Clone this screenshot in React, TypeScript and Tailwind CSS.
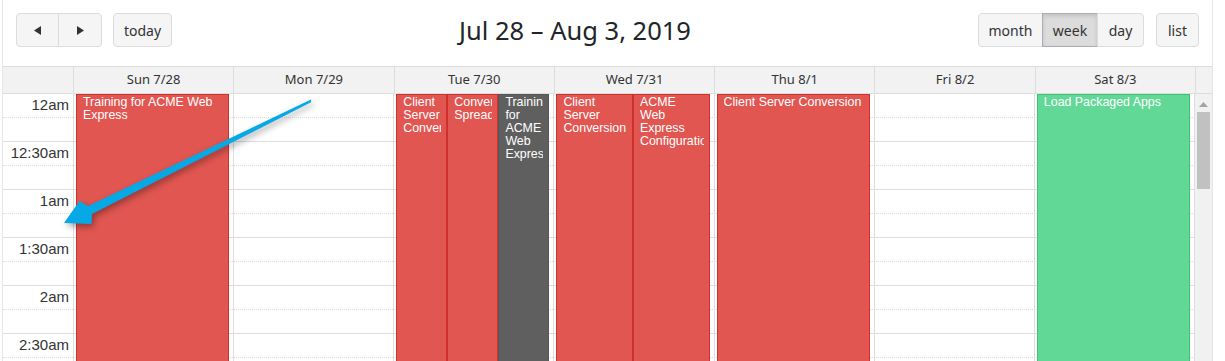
import type { ReactNode } from 'react';

// Week view of a scheduler, FullCalendar-style: toolbar, day header, and a
// time grid with slats underneath and event columns on top.

const DAYS = ['Sun 7/28', 'Mon 7/29', 'Tue 7/30', 'Wed 7/31', 'Thu 8/1', 'Fri 8/2', 'Sat 8/3'];
const LABELS = ['12am', '12:30am', '1am', '1:30am', '2am', '2:30am'];

type Tone = 'red' | 'gray' | 'green';

interface CalEvent {
  title: string;
  tone: Tone;
}

// One entry per day; each inner list is laid out side by side (overlapping events).
const EVENTS: CalEvent[][] = [
  [{ title: 'Training for ACME Web Express', tone: 'red' }],
  [],
  [
    { title: 'Client Server Conversion', tone: 'red' },
    { title: 'Conversion Spreadsheet', tone: 'red' },
    { title: 'Training for ACME Web Express', tone: 'gray' },
  ],
  [
    { title: 'Client Server Conversion', tone: 'red' },
    { title: 'ACME Web Express Configuration', tone: 'red' },
  ],
  [{ title: 'Client Server Conversion', tone: 'red' }],
  [],
  [{ title: 'Load Packaged Apps', tone: 'green' }],
];

const TONE: Record<Tone, string> = {
  red: 'bg-[#e15651] border-[#d0302c]',
  gray: 'bg-[#5f5f5f] border-[#575757]',
  green: 'bg-[#62d896] border-[#3cc671]',
};

const ui = { fontFamily: '"Noto Sans", "Open Sans", sans-serif' };
const arial = { fontFamily: '"Liberation Sans", Arial, sans-serif' };

function Btn({
  children,
  className = '',
  active = false,
}: {
  children: ReactNode;
  className?: string;
  active?: boolean;
}) {
  return (
    <button
      className={`flex h-[34px] items-center justify-center border text-[14px] text-[#333] ${
        active
          ? 'border-[#adadad] bg-[#dcdcdc] shadow-[inset_0_2px_4px_rgba(0,0,0,0.12)]'
          : 'border-[#dcdcdc] bg-[#f5f5f5]'
      } ${className}`}
      style={ui}
    >
      {children}
    </button>
  );
}

function Triangle({ dir }: { dir: 'left' | 'right' }) {
  return (
    <svg width="7" height="9" viewBox="0 0 7 9">
      <path d={dir === 'left' ? 'M7 0 L0 4.5 L7 9 Z' : 'M0 0 L7 4.5 L0 9 Z'} fill="#333" />
    </svg>
  );
}

function Toolbar() {
  return (
    <div className="flex items-center justify-between px-[13px] pt-[13px]">
      <div className="flex gap-[11px]">
        <div className="flex">
          <Btn className="w-[43px] rounded-l-[4px]">
            <Triangle dir="left" />
          </Btn>
          <Btn className="-ml-px w-[44px] rounded-r-[4px]">
            <Triangle dir="right" />
          </Btn>
        </div>
        <Btn className="w-[59px] rounded-[4px]">today</Btn>
      </div>
      <h2 className="text-[25.5px] leading-[34px] text-[#212529]" style={ui}>
        Jul 28 – Aug 3, 2019
      </h2>
      <div className="flex gap-[12px]">
        <div className="flex">
          <Btn className="w-[65px] rounded-l-[4px]">month</Btn>
          <Btn className="-ml-px w-[56px]" active>
            week
          </Btn>
          <Btn className="-ml-px w-[47px] rounded-r-[4px]">day</Btn>
        </div>
        <Btn className="w-[43px] rounded-[4px]">list</Btn>
      </div>
    </div>
  );
}

function Header() {
  return (
    <div className="mt-[19px] flex h-[28px] border-y border-[#dddddd] bg-[#f2f2f2]">
      <div className="grid flex-1 grid-cols-[71px_repeat(7,minmax(0,1fr))]">
        <div className="border-r border-[#dddddd]" />
        {DAYS.map((d) => (
          <div
            key={d}
            className="flex items-center justify-center border-r border-[#dddddd] text-[13px] text-[#333]"
            style={ui}
          >
            {d}
          </div>
        ))}
      </div>
      <div className="w-[16px]" />
    </div>
  );
}

function EventBox({ ev }: { ev: CalEvent }) {
  return (
    <div
      className={`h-[400px] min-w-0 flex-1 overflow-hidden border pl-[6px] pr-[5px] pt-[1px] text-[12.4px] leading-[13px] text-white ${TONE[ev.tone]}`}
      style={arial}
    >
      <div className="overflow-hidden">{ev.title}</div>
    </div>
  );
}

function Body() {
  const slats = Array.from({ length: 12 }, (_, i) => i);
  return (
    <div className="flex h-[267px] overflow-hidden">
      <div className="relative flex-1">
        {/* slats */}
        {slats.map((i) => (
          <div
            key={i}
            className={`flex h-[24px] border-b border-[#dddddd] ${i % 2 === 0 ? 'border-dotted' : 'border-solid'}`}
          >
            <div
              className="flex w-[66px] items-center justify-end text-[15px] text-[#333]"
              style={arial}
            >
              {i % 2 === 0 ? LABELS[i / 2] : ''}
            </div>
          </div>
        ))}
        {/* day columns with events */}
        <div className="absolute inset-0 grid grid-cols-[71px_repeat(7,minmax(0,1fr))]">
          <div className="border-r border-[#dddddd]" />
          {EVENTS.map((evs, d) => (
            <div key={d} className="flex border-r border-[#dddddd] pl-[2px] pr-[4px]">
              {evs.map((ev, k) => (
                <EventBox key={k} ev={ev} />
              ))}
            </div>
          ))}
        </div>
      </div>
      {/* scrollbar */}
      <div className="flex w-[17px] flex-col items-center bg-[#f1f1f1]">
        <svg width="9" height="5" viewBox="0 0 9 5" className="mt-[8px]">
          <path d="M0 5 L4.5 0 L9 5 Z" fill="#a3a3a3" />
        </svg>
        <div className="mt-[5px] h-[77px] w-[13px] bg-[#c1c1c1]" />
      </div>
    </div>
  );
}

function Pointer() {
  return (
    <svg
      className="pointer-events-none absolute left-0 top-0"
      width="1225"
      height="361"
      style={{ filter: 'drop-shadow(2px 3px 3px rgba(0,0,0,0.35))' }}
    >
      <polygon
        points="311,99.5 88,206 79.5,201 64,223 91.5,224 92,214 311,102.2"
        fill="#06a8e6"
      />
    </svg>
  );
}

export default function App() {
  return (
    <div className="relative h-[361px] w-[1225px] overflow-hidden bg-white">
      <div className="ml-[2px] h-full w-[1211px] border-x border-[#e6e6e6]">
        <Toolbar />
        <Header />
        <Body />
      </div>
      <Pointer />
    </div>
  );
}
